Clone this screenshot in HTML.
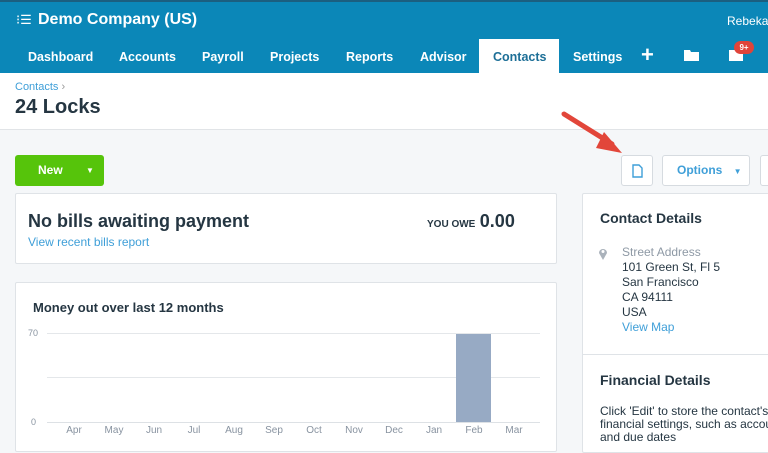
<!DOCTYPE html>
<html><head><style>
*{margin:0;padding:0;box-sizing:border-box}
body{width:768px;height:441px;overflow:hidden;background:#f5f7f9;font-family:"Liberation Sans",sans-serif;position:relative;color:#253642}
.abs{position:absolute}
.top{left:0;top:0;width:768px;height:73px;background:#0b87b8;border-top:2px solid #1b5f80}
.nav a{position:absolute;top:50px;color:#fff;font-weight:bold;font-size:12.5px}
.white{left:0;top:73px;width:768px;height:57px;background:#fff;border-bottom:1px solid #e1e4e7}
.card{background:#fff;border:1px solid #dfe3e7;border-radius:2px}
.btn{background:#fff;border:1px solid #d6dbe0;border-radius:3px}
.grid{left:47px;width:493px;height:1px;background:#e4e7ea}
.m{top:425px;font-size:10px;color:#8893a0;width:30px;text-align:center}
</style></head><body>
<div class="abs top"></div>
<div class="abs" style="left:16px;top:12px;color:#fff;font-size:13px">⁝☰</div>
<div class="abs" style="left:38px;top:11px;color:#fff;font-size:16px;font-weight:bold">Demo Company (US)</div>
<div class="abs" style="left:727px;top:14px;color:#fff;font-size:12px">Rebeka</div>
<div class="abs" style="left:479px;top:39px;width:80px;height:34px;background:#fff"></div>
<div class="nav">
<a style="left:28px">Dashboard</a><a style="left:119px">Accounts</a><a style="left:202px">Payroll</a><a style="left:270px">Projects</a><a style="left:346px">Reports</a><a style="left:420px">Advisor</a><a style="left:493px;color:#1d6f97">Contacts</a><a style="left:573px">Settings</a>
</div>
<div class="abs" style="left:641px;top:42px;color:#fff;font-size:22px;font-weight:bold">+</div>
<svg class="abs" style="left:684px;top:49px" width="16" height="12"><path d="M0 1h6l1 2h8v9H0z" fill="#fff"/></svg>
<svg class="abs" style="left:729px;top:50px" width="14" height="11"><rect width="14" height="11" fill="#fff"/></svg>
<div class="abs" style="left:734px;top:41px;width:20px;height:13px;border-radius:7px;background:#e0443a;color:#fff;font-size:8px;font-weight:bold;text-align:center;line-height:13px">9+</div>
<div class="abs white"></div>
<div class="abs" style="left:15px;top:81px;font-size:11px;color:#3f9fd8">Contacts <span style="color:#999">›</span></div>
<div class="abs" style="left:15px;top:96px;font-size:20px;font-weight:bold">24 Locks</div>
<svg class="abs" style="left:560px;top:108px" width="70" height="48"><path d="M4 6 L52 36" stroke="#e2463a" stroke-width="5" stroke-linecap="round"/><path d="M44 24 L62 45 L36 40 Z" fill="#e2463a"/></svg>
<div class="abs" style="left:15px;top:155px;width:89px;height:31px;background:#56c40b;border-radius:3px;color:#fff;font-weight:bold;font-size:12px;line-height:31px;padding-left:23px">New <span style="position:absolute;left:71px;font-size:8px">▼</span></div>
<div class="abs btn" style="left:621px;top:155px;width:32px;height:31px"><svg style="margin:8px 0 0 10px" width="11" height="14"><path d="M1 1h6l3 3v9H1z" fill="none" stroke="#3f9fd8" stroke-width="1.4"/></svg></div>
<div class="abs btn" style="left:662px;top:155px;width:88px;height:31px;color:#3f9fd8;font-weight:bold;font-size:12px;line-height:29px;padding-left:14px">Options <span style="font-size:8px;margin-left:8px">▼</span></div>
<div class="abs btn" style="left:760px;top:155px;width:20px;height:31px"></div>
<div class="abs card" style="left:15px;top:193px;width:542px;height:71px"></div>
<div class="abs" style="left:28px;top:211px;font-size:18px;font-weight:bold">No bills awaiting payment</div>
<div class="abs" style="left:28px;top:235px;font-size:12px;color:#3f9fd8">View recent bills report</div>
<div class="abs" style="left:427px;top:211px;font-weight:bold"><span style="font-size:10px">YOU OWE</span> <span style="font-size:18px">0.00</span></div>
<div class="abs card" style="left:15px;top:282px;width:542px;height:170px"></div>
<div class="abs" style="left:33px;top:300px;font-size:13px;font-weight:bold">Money out over last 12 months</div>
<div class="abs grid" style="top:333px"></div><div class="abs grid" style="top:377px"></div><div class="abs grid" style="top:422px;background:#dde1e5"></div>
<div class="abs" style="left:28px;top:328px;font-size:9px;color:#8893a0">70</div>
<div class="abs" style="left:31px;top:417px;font-size:9px;color:#8893a0">0</div>
<div class="abs" style="left:456px;top:334px;width:35px;height:88px;background:#97aac4"></div>
<div class="abs m" style="left:59px">Apr</div><div class="abs m" style="left:99px">May</div><div class="abs m" style="left:139px">Jun</div><div class="abs m" style="left:179px">Jul</div><div class="abs m" style="left:219px">Aug</div><div class="abs m" style="left:259px">Sep</div><div class="abs m" style="left:299px">Oct</div><div class="abs m" style="left:339px">Nov</div><div class="abs m" style="left:379px">Dec</div><div class="abs m" style="left:419px">Jan</div><div class="abs m" style="left:459px">Feb</div><div class="abs m" style="left:499px">Mar</div>
<div class="abs card" style="left:582px;top:193px;width:200px;height:260px"></div>
<div class="abs" style="left:583px;top:354px;width:190px;height:1px;background:#dfe3e7"></div>
<div class="abs" style="left:600px;top:210px;font-size:14px;font-weight:bold">Contact Details</div>
<svg class="abs" style="left:598px;top:247px" width="10" height="13"><path d="M5 13 L1 6 A4 4 0 1 1 9 6 Z" fill="#aab2bb"/><circle cx="5" cy="4.5" r="1.5" fill="#fff"/></svg>
<div class="abs" style="left:622px;top:245px;font-size:12px;line-height:15px"><span style="color:#8e99a5">Street Address</span><br>101 Green St, Fl 5<br>San Francisco<br>CA 94111<br>USA<br><span style="color:#3f9fd8">View Map</span></div>
<div class="abs" style="left:600px;top:372px;font-size:14px;font-weight:bold">Financial Details</div>
<div class="abs" style="left:600px;top:405px;font-size:12px;line-height:13px;white-space:nowrap">Click 'Edit' to store the contact's d<br>financial settings, such as accoun<br>and due dates</div>
</body></html>
